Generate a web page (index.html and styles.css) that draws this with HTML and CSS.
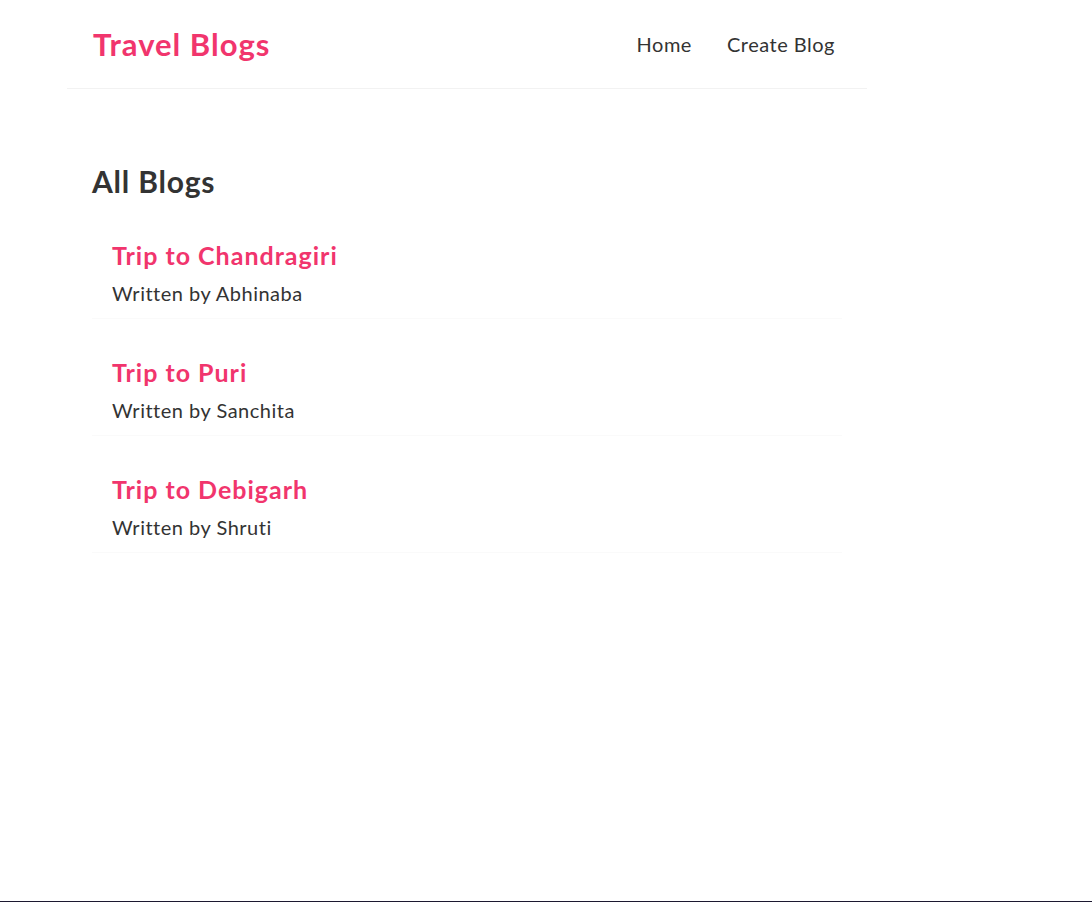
FILE: index.html
```html
<!DOCTYPE html>
<html>
<head>
    <title>Travel Blogs</title>
    <link rel="stylesheet" href="styles.css">
</head>
<body>
    <div class="app">
        <nav class="navbar">
            <h1>Travel Blogs</h1>
            <div class="links">
                <a href="/">Home</a>
                <a href="/create">Create Blog</a>
            </div>
        </nav>
        <div class="content">
            <div class="home">
                <h2>All Blogs</h2>
                <div class="blog-preview">
                    <h2>Trip to Chandragiri</h2>
                    <p>Written by Abhinaba</p>
                </div>
                <div class="blog-preview">
                    <h2>Trip to Puri</h2>
                    <p>Written by Sanchita</p>
                </div>
                <div class="blog-preview">
                    <h2>Trip to Debigarh</h2>
                    <p>Written by Shruti</p>
                </div>
            </div>
        </div>
    </div>
</body>
</html>
```

FILE: styles.css
```css
* {
    margin: 0;
    box-sizing: border-box;
}

html {
    min-height: 100vh;
    border-bottom: 1px solid #1c1830;
}

body {
    margin: 0;
    font-family: Lato, "Open Sans", sans-serif;
    color: #333;
}

.app {
    max-width: 800px;
    margin-left: 67px;
}

.navbar {
    height: 89px;
    padding: 0 26px;
    display: flex;
    align-items: center;
    border-bottom: 1px solid #f2f2f2;
}

.navbar h1 {
    color: #f1356d;
    font-size: 31px;
    font-weight: 700;
    line-height: 36px;
    letter-spacing: 1px;
}

.navbar .links {
    margin-left: auto;
}

.navbar a {
    margin-left: 19px;
    padding: 6px;
    text-decoration: none;
    color: #333;
    font-size: 20px;
    letter-spacing: 0.5px;
}

.content {
    padding: 74px 25px 25px;
}

.home > h2 {
    font-size: 30px;
    font-weight: 700;
    line-height: 36px;
    letter-spacing: 0.8px;
    margin-bottom: 27px;
}

.blog-preview {
    padding: 14px 20px 11px;
    margin: 24px 0;
    border-bottom: 1px solid #fafafa;
}

.blog-preview h2 {
    font-size: 25px;
    font-weight: 700;
    line-height: 30px;
    letter-spacing: 1px;
    color: #f1356d;
    margin-bottom: 9px;
}

.blog-preview p {
    font-size: 20px;
    line-height: 28px;
    letter-spacing: 0.5px;
}
```
